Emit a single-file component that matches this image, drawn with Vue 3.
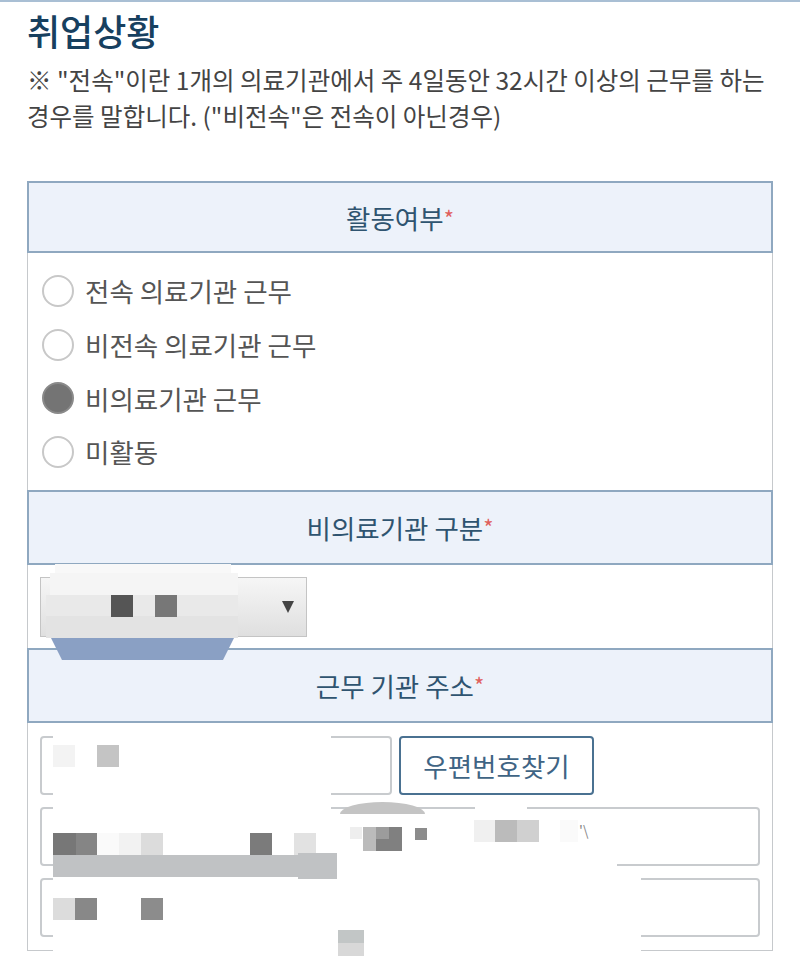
<script setup>
const options = [
  { label: '전속 의료기관 근무', checked: false },
  { label: '비전속 의료기관 근무', checked: false },
  { label: '비의료기관 근무', checked: true },
  { label: '미활동', checked: false }
]

// 개인정보 가림 처리 (x, y, w, h, color)
const masks = [
  [53, 725, 278, 246, '#fff'],
  [331, 815, 286, 51, '#fff'],
  [331, 866, 295, 12, '#fff'],
  [331, 878, 310, 93, '#fff'],
  [475, 800, 52, 12, '#fff'],
  [55, 564, 176, 9, '#f8f8f8'],
  [50, 573, 188, 22, '#f5f5f5'],
  [46, 595, 192, 21, '#e9e9e9'],
  [46, 616, 192, 22, '#e3e3e3'],
  [111, 595, 22, 22, '#555'],
  [155, 595, 22, 22, '#777'],
  [53, 745, 22, 22, '#f3f3f3'],
  [97, 745, 22, 22, '#c4c4c4'],
  [53, 833, 23, 22, '#777'],
  [76, 833, 21, 22, '#858585'],
  [97, 833, 22, 22, '#fafafa'],
  [119, 833, 22, 22, '#f2f2f2'],
  [141, 833, 22, 22, '#dcdcdc'],
  [250, 833, 22, 22, '#7b7b7b'],
  [294, 833, 22, 22, '#e2e2e2'],
  [53, 855, 284, 22, '#c0c2c4'],
  [298, 853, 39, 26, '#c0c2c4'],
  [350, 827, 12, 12, '#eee'],
  [363, 827, 13, 24, '#bbb'],
  [376, 827, 13, 12, '#9c9c9c'],
  [376, 839, 13, 12, '#808080'],
  [389, 827, 13, 24, '#808080'],
  [415, 828, 12, 12, '#8c8c8c'],
  [474, 820, 21, 22, '#f0f0f0'],
  [495, 820, 22, 22, '#bbb'],
  [517, 820, 22, 22, '#d0d0d0'],
  [560, 820, 18, 22, '#fafafa'],
  [53, 898, 22, 22, '#dcdcdc'],
  [75, 898, 22, 22, '#888'],
  [141, 898, 22, 22, '#8c8c8c'],
  [338, 930, 26, 13, '#c2c6c6'],
  [338, 943, 26, 13, '#d8d8d8']
]

const maskStyle = (m) => ({
  left: m[0] + 'px',
  top: m[1] + 'px',
  width: m[2] + 'px',
  height: m[3] + 'px',
  background: m[4]
})
</script>

<template>
  <div class="page">
    <h2 class="title">취업상황</h2>
    <p class="desc">※ "전속"이란 1개의 의료기관에서 주 4일동안 32시간 이상의 근무를 하는 경우를 말합니다. ("비전속"은 전속이 아닌경우)</p>

    <div class="table">
      <div class="head first">활동여부<span class="req">*</span></div>
      <div class="radios">
        <label v-for="item in options" :key="item.label" class="radio-row">
          <span class="radio" :class="{ checked: item.checked }"></span>
          {{ item.label }}
        </label>
      </div>

      <div class="head second">비의료기관 구분<span class="req">*</span></div>
      <div class="select-row">
        <div class="select"><span class="arrow"></span></div>
      </div>

      <div class="head third">근무 기관 주소<span class="req">*</span></div>
      <div class="address">
        <div class="zip-row">
          <div class="input zip"></div>
          <button class="zip-btn">우편번호찾기</button>
        </div>
        <div class="input"></div>
        <div class="input"></div>
      </div>
    </div>

    <div v-for="(m, i) in masks" :key="i" class="mask" :style="maskStyle(m)"></div>
    <div class="mask trapezoid"></div>
    <div class="mask arc"></div>
    <span class="mask stray">'\</span>
  </div>
</template>

<style scoped>
.page {
  position: relative;
  width: 800px;
  height: 971px;
  overflow: hidden;
  box-sizing: border-box;
  padding: 0 27px;
  background: #fff;
  border-top: 2px solid #a9bfd4;
  font-family: "Noto Sans CJK KR", "Noto Sans", sans-serif;
}
.title {
  margin: 5px 0 0;
  font-size: 36px;
  line-height: 46px;
  font-weight: 500;
  color: #17405f;
}
.desc {
  margin: 9px 0 0;
  font-size: 24.5px;
  line-height: 36px;
  color: #444;
}
.table {
  margin-top: 47px;
  width: 746px;
  box-sizing: border-box;
  border: 1px solid #c6c9cc;
  border-top: none;
  padding-bottom: 13px;
}
.head {
  box-sizing: border-box;
  margin: 0 -1px;
  display: flex;
  align-items: center;
  justify-content: center;
  background: #edf2fa;
  border: 2px solid #8fa8c0;
  font-size: 26.5px;
  color: #2f5470;
}
.first { height: 72px; }
.second { height: 75px; }
.third { height: 75px; }
.req {
  color: #e0605c;
  align-self: flex-start;
  margin-top: 18px;
  font-size: 22px;
}
.radios {
  display: flex;
  flex-direction: column;
  padding-top: 11px;
  height: 237px;
  box-sizing: border-box;
}
.radio-row {
  display: flex;
  align-items: center;
  gap: 11px;
  height: 53.7px;
  padding-left: 14px;
  font-size: 26.5px;
  color: #555;
}
.radio {
  box-sizing: border-box;
  width: 32px;
  height: 32px;
  border-radius: 50%;
  border: 2px solid #c8c8c8;
  background: #fff;
}
.radio.checked {
  background: #747474;
  border-color: #8a8a8a;
}
.select-row {
  height: 83px;
  padding: 12px 0 0 12px;
  box-sizing: border-box;
}
.select {
  box-sizing: border-box;
  width: 267px;
  height: 60px;
  display: flex;
  align-items: center;
  justify-content: flex-end;
  padding-right: 12px;
  border: 1px solid #c4c4c4;
  background: linear-gradient(#f6f6f6, #dfdfdf);
}
.arrow {
  width: 0;
  height: 0;
  border-left: 6px solid transparent;
  border-right: 6px solid transparent;
  border-top: 12px solid #444;
}
.address {
  display: flex;
  flex-direction: column;
  gap: 12px;
  padding: 13px 12px 0;
}
.zip-row {
  display: flex;
  gap: 7px;
}
.input {
  box-sizing: border-box;
  width: 720px;
  height: 59px;
  border: 2px solid #c8cbce;
  border-radius: 4px;
  background: #fff;
}
.input.zip {
  width: 352px;
}
.zip-btn {
  box-sizing: border-box;
  width: 195px;
  height: 59px;
  padding: 0;
  background: #fff;
  border: 2px solid #4a7191;
  border-radius: 4px;
  font-family: inherit;
  font-size: 26.5px;
  color: #3f6484;
}
.mask {
  position: absolute;
  margin-top: -2px;
}
.trapezoid {
  left: 51px;
  top: 638px;
  width: 183px;
  height: 22px;
  background: #8aa0c4;
  clip-path: polygon(0 0, 100% 0, 94% 100%, 6% 100%);
}
.arc {
  left: 340px;
  top: 802px;
  width: 85px;
  height: 12px;
  background: #c4c4c4;
  border-radius: 50% 50% 0 0 / 100% 100% 0 0;
}
.stray {
  left: 579px;
  top: 820px;
  font-size: 14px;
  color: #888;
}
</style>
